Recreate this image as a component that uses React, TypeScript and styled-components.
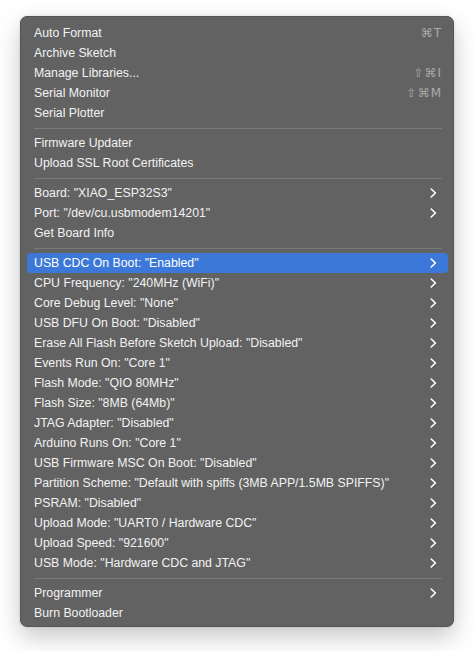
import styled, { createGlobalStyle } from "styled-components";

const GlobalStyle = createGlobalStyle`
    html, body {
        margin: 0;
        padding: 0;
        background: #ffffff;
    }
    body {
        width: 474px;
        height: 651px;
        overflow: hidden;
    }
`;

const Page = styled.div`
    padding: 16px 20px 0 20px;
    width: 474px;
    height: 651px;
    box-sizing: border-box;
`;

const Menu = styled.div`
    width: 434px;
    box-sizing: border-box;
    padding: 6px 5px 3px 6px;
    background: #626262;
    border: 1px solid #555555;
    border-radius: 7px;
    box-shadow: 0 10px 24px rgba(0, 0, 0, 0.22), 0 0 3px rgba(0, 0, 0, 0.12);
    font-family: "Liberation Sans", Arial, sans-serif;
    font-size: 12.3px;
    color: #f2f2f2;
`;

const Row = styled.div<{ $active?: boolean }>`
    display: flex;
    align-items: center;
    justify-content: space-between;
    height: 20px;
    padding: 0 10px 0 7px;
    border-radius: 4px;
    background: ${(p) => (p.$active ? "#3b78d8" : "transparent")};
    color: ${(p) => (p.$active ? "#ffffff" : "#f2f2f2")};
    white-space: nowrap;
`;

const Shortcut = styled.span`
    font-family: "DejaVu Sans", sans-serif;
    font-size: 12px;
    color: #ababab;
    margin-right: -4px;
    letter-spacing: 1px;
`;

const Chevron = styled.svg`
    width: 7px;
    height: 10px;
    margin-right: 1px;
`;

const Separator = styled.div`
    height: 10px;
    display: flex;
    align-items: center;
    padding: 0 6px 0 7px;
    &::after {
        content: "";
        flex: 1;
        height: 1px;
        background: #7b7b7b;
    }
`;

type Item = { label: string; shortcut?: string; sub?: boolean; active?: boolean } | "sep";

const items: Item[] = [
    { label: "Auto Format", shortcut: "⌘T" },
    { label: "Archive Sketch" },
    { label: "Manage Libraries...", shortcut: "⇧⌘I" },
    { label: "Serial Monitor", shortcut: "⇧⌘M" },
    { label: "Serial Plotter" },
    "sep",
    { label: "Firmware Updater" },
    { label: "Upload SSL Root Certificates" },
    "sep",
    { label: 'Board: "XIAO_ESP32S3"', sub: true },
    { label: 'Port: "/dev/cu.usbmodem14201"', sub: true },
    { label: "Get Board Info" },
    "sep",
    { label: 'USB CDC On Boot: "Enabled"', sub: true, active: true },
    { label: 'CPU Frequency: "240MHz (WiFi)"', sub: true },
    { label: 'Core Debug Level: "None"', sub: true },
    { label: 'USB DFU On Boot: "Disabled"', sub: true },
    { label: 'Erase All Flash Before Sketch Upload: "Disabled"', sub: true },
    { label: 'Events Run On: "Core 1"', sub: true },
    { label: 'Flash Mode: "QIO 80MHz"', sub: true },
    { label: 'Flash Size: "8MB (64Mb)"', sub: true },
    { label: 'JTAG Adapter: "Disabled"', sub: true },
    { label: 'Arduino Runs On: "Core 1"', sub: true },
    { label: 'USB Firmware MSC On Boot: "Disabled"', sub: true },
    { label: 'Partition Scheme: "Default with spiffs (3MB APP/1.5MB SPIFFS)"', sub: true },
    { label: 'PSRAM: "Disabled"', sub: true },
    { label: 'Upload Mode: "UART0 / Hardware CDC"', sub: true },
    { label: 'Upload Speed: "921600"', sub: true },
    { label: 'USB Mode: "Hardware CDC and JTAG"', sub: true },
    "sep",
    { label: "Programmer", sub: true },
    { label: "Burn Bootloader" },
];

const ChevronIcon = () => (
    <Chevron viewBox="0 0 7 10">
        <path d="M1.2 1 L5.4 5 L1.2 9" fill="none" stroke="#ffffff" strokeWidth="1.6" strokeLinecap="round" strokeLinejoin="round" />
    </Chevron>
);

export default function App() {
    return (
        <Page>
            <GlobalStyle />
            <Menu>
                {items.map((item, i) =>
                    item === "sep" ? (
                        <Separator key={i} />
                    ) : (
                        <Row key={i} $active={item.active}>
                            <span>{item.label}</span>
                            {item.shortcut && <Shortcut>{item.shortcut}</Shortcut>}
                            {item.sub && <ChevronIcon />}
                        </Row>
                    )
                )}
            </Menu>
        </Page>
    );
}
